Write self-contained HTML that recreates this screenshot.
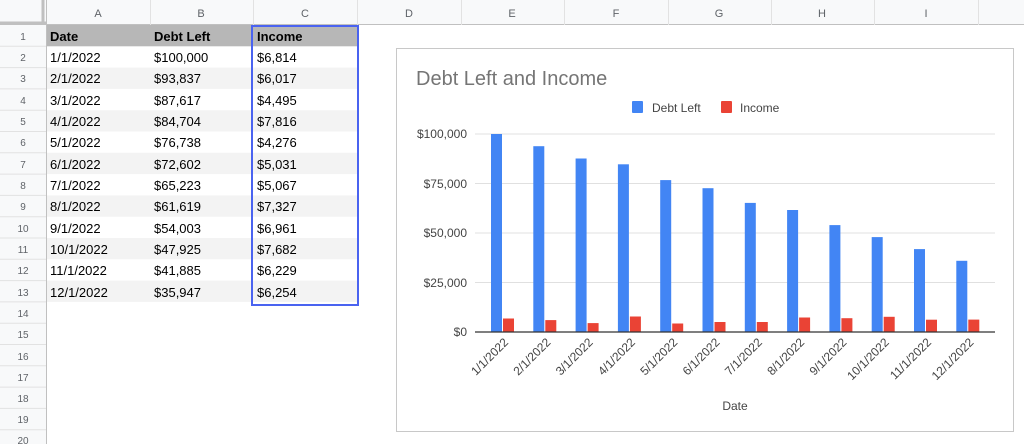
<!DOCTYPE html>
<html><head><meta charset="utf-8"><style>
body{margin:0;width:1024px;height:444px;overflow:hidden;background:#fff;font-family:"Liberation Sans",Arial,sans-serif}
svg{display:block}
</style></head><body>
<svg width="1024" height="444" xmlns="http://www.w3.org/2000/svg" font-family="Liberation Sans, Arial, sans-serif">
<!-- column header -->
<rect x="0" y="0" width="1024" height="25" fill="#f8f9fa"/>
<rect x="0" y="0" width="46" height="444" fill="#f8f9fa"/>
<rect x="0" y="0" width="44" height="23" fill="#f8f9fa"/>
<line x1="0" y1="24.5" x2="1024" y2="24.5" stroke="#c0c0c0"/>
<line x1="43" y1="0" x2="43" y2="25" stroke="#c0c0c0" stroke-width="3"/>
<line x1="0" y1="23" x2="46" y2="23" stroke="#c0c0c0" stroke-width="3"/>
<line x1="46.5" y1="0" x2="46.5" y2="444" stroke="#c0c0c0"/>
<g stroke="#e2e2e2">
<line x1="150.5" y1="0" x2="150.5" y2="25"/><line x1="253.5" y1="0" x2="253.5" y2="25"/>
<line x1="357.5" y1="0" x2="357.5" y2="25"/><line x1="461.5" y1="0" x2="461.5" y2="25"/>
<line x1="564.5" y1="0" x2="564.5" y2="25"/><line x1="668.5" y1="0" x2="668.5" y2="25"/>
<line x1="771.5" y1="0" x2="771.5" y2="25"/><line x1="874.5" y1="0" x2="874.5" y2="25"/>
<line x1="978.5" y1="0" x2="978.5" y2="25"/>
</g>
<g font-size="11" fill="#5f6368" text-anchor="middle">
<text x="98" y="17">A</text><text x="201" y="17">B</text><text x="305" y="17">C</text>
<text x="409" y="17">D</text><text x="512" y="17">E</text><text x="616" y="17">F</text>
<text x="719" y="17">G</text><text x="822" y="17">H</text><text x="926" y="17">I</text>
</g>
<!-- row stripes -->
<rect x="47" y="25" width="310" height="21.3" fill="#b7b7b7"/>
<g fill="#f3f3f3">
<rect x="47" y="67.6" width="310" height="21.3"/><rect x="47" y="110.2" width="310" height="21.3"/>
<rect x="47" y="152.8" width="310" height="21.3"/><rect x="47" y="195.4" width="310" height="21.3"/>
<rect x="47" y="238" width="310" height="21.3"/><rect x="47" y="280.6" width="310" height="21.3"/>
</g>
<!-- row header lines and numbers -->
<g stroke="#e2e2e2">
<line x1="0" y1="46.3" x2="46" y2="46.3"/><line x1="0" y1="67.6" x2="46" y2="67.6"/><line x1="0" y1="88.9" x2="46" y2="88.9"/>
<line x1="0" y1="110.2" x2="46" y2="110.2"/><line x1="0" y1="131.5" x2="46" y2="131.5"/><line x1="0" y1="152.8" x2="46" y2="152.8"/>
<line x1="0" y1="174.1" x2="46" y2="174.1"/><line x1="0" y1="195.4" x2="46" y2="195.4"/><line x1="0" y1="216.7" x2="46" y2="216.7"/>
<line x1="0" y1="238" x2="46" y2="238"/><line x1="0" y1="259.3" x2="46" y2="259.3"/><line x1="0" y1="280.6" x2="46" y2="280.6"/>
<line x1="0" y1="301.9" x2="46" y2="301.9"/><line x1="0" y1="323.2" x2="46" y2="323.2"/><line x1="0" y1="344.5" x2="46" y2="344.5"/>
<line x1="0" y1="365.8" x2="46" y2="365.8"/><line x1="0" y1="387.1" x2="46" y2="387.1"/><line x1="0" y1="408.4" x2="46" y2="408.4"/>
<line x1="0" y1="429.7" x2="46" y2="429.7"/>
</g>
<g font-size="10" fill="#5f6368" text-anchor="middle">
<text x="23" y="40">1</text><text x="23" y="61">2</text><text x="23" y="82">3</text><text x="23" y="104">4</text>
<text x="23" y="125">5</text><text x="23" y="146">6</text><text x="23" y="168">7</text><text x="23" y="189">8</text>
<text x="23" y="210">9</text><text x="23" y="232">10</text><text x="23" y="253">11</text><text x="23" y="274">12</text>
<text x="23" y="296">13</text><text x="23" y="317">14</text><text x="23" y="338">15</text><text x="23" y="360">16</text>
<text x="23" y="381">17</text><text x="23" y="402">18</text><text x="23" y="423">19</text><text x="23" y="444">20</text>
</g>
<!-- cells -->
<g font-size="13" font-weight="bold" fill="#000">
<text x="50" y="41">Date</text><text x="154" y="41">Debt Left</text><text x="257" y="41">Income</text>
</g>
<g font-size="13" fill="#000">
<text x="50" y="62">1/1/2022</text><text x="154" y="62">$100,000</text><text x="257" y="62">$6,814</text>
<text x="50" y="83">2/1/2022</text><text x="154" y="83">$93,837</text><text x="257" y="83">$6,017</text>
<text x="50" y="105">3/1/2022</text><text x="154" y="105">$87,617</text><text x="257" y="105">$4,495</text>
<text x="50" y="126">4/1/2022</text><text x="154" y="126">$84,704</text><text x="257" y="126">$7,816</text>
<text x="50" y="147">5/1/2022</text><text x="154" y="147">$76,738</text><text x="257" y="147">$4,276</text>
<text x="50" y="169">6/1/2022</text><text x="154" y="169">$72,602</text><text x="257" y="169">$5,031</text>
<text x="50" y="190">7/1/2022</text><text x="154" y="190">$65,223</text><text x="257" y="190">$5,067</text>
<text x="50" y="211">8/1/2022</text><text x="154" y="211">$61,619</text><text x="257" y="211">$7,327</text>
<text x="50" y="233">9/1/2022</text><text x="154" y="233">$54,003</text><text x="257" y="233">$6,961</text>
<text x="50" y="254">10/1/2022</text><text x="154" y="254">$47,925</text><text x="257" y="254">$7,682</text>
<text x="50" y="275">11/1/2022</text><text x="154" y="275">$41,885</text><text x="257" y="275">$6,229</text>
<text x="50" y="297">12/1/2022</text><text x="154" y="297">$35,947</text><text x="257" y="297">$6,254</text>
</g>
<rect x="252" y="26" width="106" height="279" fill="none" stroke="#4a63f0" stroke-width="2"/>
<!-- chart -->
<rect x="396.5" y="48.5" width="617" height="383" fill="#fff" stroke="#c8c8c8"/>
<text x="416" y="85" font-size="20" fill="#757575">Debt Left and Income</text>
<rect x="632" y="101" width="11" height="12" rx="1" fill="#4285f4"/>
<text x="652" y="112" font-size="12" fill="#444">Debt Left</text>
<rect x="721" y="101" width="11" height="12" rx="1" fill="#ea4335"/>
<text x="740" y="112" font-size="12" fill="#444">Income</text>
<g stroke="#e0e0e0"><line x1="475" y1="134" x2="995" y2="134"/><line x1="475" y1="183.5" x2="995" y2="183.5"/>
<line x1="475" y1="233" x2="995" y2="233"/><line x1="475" y1="282.5" x2="995" y2="282.5"/></g>
<g font-size="12" fill="#444" text-anchor="end">
<text x="467" y="138">$100,000</text><text x="467" y="188">$75,000</text><text x="467" y="237">$50,000</text>
<text x="467" y="287">$25,000</text><text x="467" y="336">$0</text></g>
<g fill="#4285f4">
<rect x="491" y="134" width="11" height="198"/><rect x="533.3" y="146.2" width="11" height="185.8"/>
<rect x="575.6" y="158.5" width="11" height="173.5"/><rect x="617.9" y="164.3" width="11" height="167.7"/>
<rect x="660.2" y="180.1" width="11" height="151.9"/><rect x="702.5" y="188.2" width="11" height="143.8"/>
<rect x="744.8" y="202.9" width="11" height="129.1"/><rect x="787.1" y="210" width="11" height="122"/>
<rect x="829.4" y="225.1" width="11" height="106.9"/><rect x="871.7" y="237.1" width="11" height="94.9"/>
<rect x="914" y="249.1" width="11" height="82.9"/><rect x="956.3" y="260.8" width="11" height="71.2"/>
</g>
<g fill="#ea4335">
<rect x="503" y="318.5" width="11" height="13.5"/><rect x="545.3" y="320.1" width="11" height="11.9"/>
<rect x="587.6" y="323.1" width="11" height="8.9"/><rect x="629.9" y="316.5" width="11" height="15.5"/>
<rect x="672.2" y="323.5" width="11" height="8.5"/><rect x="714.5" y="322" width="11" height="10"/>
<rect x="756.8" y="322" width="11" height="10"/><rect x="799.1" y="317.5" width="11" height="14.5"/>
<rect x="841.4" y="318.2" width="11" height="13.8"/><rect x="883.7" y="316.8" width="11" height="15.2"/>
<rect x="926" y="319.7" width="11" height="12.3"/><rect x="968.3" y="319.6" width="11" height="12.4"/>
</g>
<line x1="475" y1="332" x2="995" y2="332" stroke="#333" stroke-width="1.2"/>
<g font-size="12" fill="#444" text-anchor="end">
<text transform="translate(509,343) rotate(-45)">1/1/2022</text>
<text transform="translate(551.3,343) rotate(-45)">2/1/2022</text>
<text transform="translate(593.6,343) rotate(-45)">3/1/2022</text>
<text transform="translate(635.9,343) rotate(-45)">4/1/2022</text>
<text transform="translate(678.2,343) rotate(-45)">5/1/2022</text>
<text transform="translate(720.5,343) rotate(-45)">6/1/2022</text>
<text transform="translate(762.8,343) rotate(-45)">7/1/2022</text>
<text transform="translate(805.1,343) rotate(-45)">8/1/2022</text>
<text transform="translate(847.4,343) rotate(-45)">9/1/2022</text>
<text transform="translate(889.7,343) rotate(-45)">10/1/2022</text>
<text transform="translate(932,343) rotate(-45)">11/1/2022</text>
<text transform="translate(974.3,343) rotate(-45)">12/1/2022</text>
</g>
<text x="735" y="410" font-size="12" fill="#444" text-anchor="middle">Date</text>
</svg>
</body></html>
